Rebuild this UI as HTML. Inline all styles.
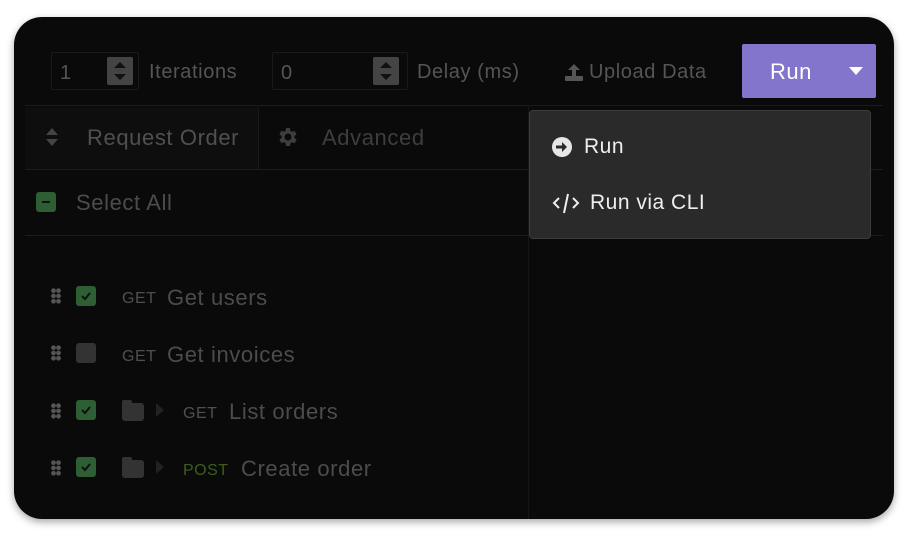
<!DOCTYPE html>
<html><head><style>
*{margin:0;padding:0;box-sizing:border-box}
body{width:920px;height:542px;background:#fff;font-family:"Liberation Sans",sans-serif;position:relative;overflow:hidden}
.card{position:absolute;left:14px;top:17px;width:880px;height:502px;background:#0a0a0a;border-radius:28px;box-shadow:0 3px 8px rgba(0,0,0,.35);overflow:hidden}
.a{position:absolute;white-space:nowrap}
.t{color:#555;font-size:20px;letter-spacing:.6px}
.inp{position:absolute;border:1px solid #1a1a1a;border-radius:2px;height:38px;top:35px}
.spin{position:absolute;width:26px;height:28px;background:#444;border-radius:2px;top:4px}
.hl{position:absolute;height:1px;background:#1c1c1c}
.cb{position:absolute;width:20px;height:20px;border-radius:3px;background:#2d5e34}
.cb.off{background:#333}
.dots{position:absolute;width:10px;height:16px;background:radial-gradient(circle,#555 2.2px,transparent 2.5px) 0 0/5px 5.3px}
.m{font-size:16px;color:#505050;letter-spacing:.5px}
.n{font-size:22px;color:#4c4c4c;letter-spacing:.6px}
.fold{position:absolute;width:22px;height:18px;background:#333;border-radius:3px}
.fold:before{content:"";position:absolute;left:0;top:-3px;width:10px;height:5px;background:#333;border-radius:2px 2px 0 0}
.tri{position:absolute;width:0;height:0;border-left:8px solid #222;border-top:7px solid transparent;border-bottom:7px solid transparent}
</style></head><body>
<div class="card">
 <div class="inp" style="left:37px;width:88px"><span class="a t" style="left:8px;top:9px;color:#555">1</span><div class="spin" style="left:55px"><svg width="26" height="28"><path d="M7 11 13 5 19 11Z M7 17 13 23 19 17Z" fill="#111"/></svg></div></div>
 <span class="a t" style="left:135px;top:44px">Iterations</span>
 <div class="inp" style="left:258px;width:136px"><span class="a t" style="left:8px;top:9px">0</span><div class="spin" style="left:100px"><svg width="26" height="28"><path d="M7 11 13 5 19 11Z M7 17 13 23 19 17Z" fill="#111"/></svg></div></div>
 <span class="a t" style="left:403px;top:44px">Delay (ms)</span>
 <svg class="a" style="left:549px;top:44px" width="22" height="22"><path d="M11 3 5 9h4v7h4V9h4Z" fill="#555"/><rect x="2" y="15" width="18" height="5" rx="1" fill="#555"/></svg>
 <span class="a t" style="left:575px;top:44px">Upload Data</span>
 <div class="a" style="left:728px;top:27px;width:134px;height:54px;background:#8475cc;border-radius:2px">
  <span class="a" style="left:28px;top:15px;color:#fff;font-size:22px;letter-spacing:.5px">Run</span>
  <svg class="a" style="left:106px;top:22px" width="16" height="10"><path d="M1 1h14L8 9Z" fill="#fff"/></svg>
 </div>
 <div class="hl" style="left:11px;right:11px;top:88px"></div>
 <div class="a" style="left:11px;top:90px;width:233px;height:62px;background:#0e0e0e"></div>
 <div class="a" style="left:244px;top:90px;width:1px;height:62px;background:#1a1a1a"></div>
 <svg class="a" style="left:29px;top:108px" width="18" height="24"><path d="M3 10 9 3 15 10Z M3 14 9 21 15 14Z" fill="#444"/></svg>
 <span class="a n" style="left:73px;top:108px;color:#505050">Request Order</span>
 <svg class="a" style="left:261px;top:108px" width="24" height="24" viewBox="0 0 24 24"><path fill="#3e3e3e" d="M19.4 13a7.5 7.5 0 0 0 0-2l2.1-1.6-2-3.5-2.5 1a7 7 0 0 0-1.7-1L15 3h-4l-.4 2.7a7 7 0 0 0-1.7 1l-2.5-1-2 3.5L6.6 11a7.5 7.5 0 0 0 0 2l-2.2 1.6 2 3.5 2.5-1a7 7 0 0 0 1.7 1L11 21h4l.4-2.7a7 7 0 0 0 1.7-1l2.5 1 2-3.5ZM13 15.5a3.5 3.5 0 1 1 0-7 3.5 3.5 0 0 1 0 7Z"/></svg>
 <span class="a n" style="left:308px;top:108px;color:#3e3e3e">Advanced</span>
 <div class="hl" style="left:11px;right:11px;top:152px"></div>
 <div class="cb" style="left:22px;top:175px;background:#2d5e34"><div style="position:absolute;left:6px;top:9px;width:8px;height:2px;background:#111"></div></div>
 <span class="a n" style="left:62px;top:173px">Select All</span>
 <div class="hl" style="left:11px;right:11px;top:218px"></div>
 <div class="a" style="left:514px;top:88px;width:1px;height:414px;background:#161616"></div>

 <div class="dots" style="left:37px;top:271px"></div>
 <div class="cb" style="left:62px;top:269px"><svg width="20" height="20"><path d="M6 10l3 3 5-6" stroke="#111" stroke-width="2" fill="none"/></svg></div>
 <span class="a m" style="left:108px;top:273px">GET</span><span class="a n" style="left:153px;top:268px">Get users</span>

 <div class="dots" style="left:37px;top:328px"></div>
 <div class="cb off" style="left:62px;top:326px"></div>
 <span class="a m" style="left:108px;top:331px">GET</span><span class="a n" style="left:153px;top:325px">Get invoices</span>

 <div class="dots" style="left:37px;top:386px"></div>
 <div class="cb" style="left:62px;top:383px"><svg width="20" height="20"><path d="M6 10l3 3 5-6" stroke="#111" stroke-width="2" fill="none"/></svg></div>
 <div class="fold" style="left:108px;top:386px"></div><div class="tri" style="left:142px;top:386px"></div>
 <span class="a m" style="left:169px;top:388px">GET</span><span class="a n" style="left:215px;top:382px">List orders</span>

 <div class="dots" style="left:37px;top:443px"></div>
 <div class="cb" style="left:62px;top:440px"><svg width="20" height="20"><path d="M6 10l3 3 5-6" stroke="#111" stroke-width="2" fill="none"/></svg></div>
 <div class="fold" style="left:108px;top:443px"></div><div class="tri" style="left:142px;top:443px"></div>
 <span class="a m" style="left:169px;top:445px;color:#3c5e1c">POST</span><span class="a n" style="left:227px;top:439px">Create order</span>
</div>
<div class="a" style="left:529px;top:110px;width:342px;height:129px;background:#2a2a2a;border:1px solid #3c3c3c;border-radius:4px">
 <svg class="a" style="left:21px;top:25px" width="22" height="22"><circle cx="11" cy="11" r="10" fill="#e6e6e6"/><path d="M5 9.5h6V6l5 5-5 5v-3.5H5Z" fill="#2a2a2a"/></svg>
 <span class="a" style="left:54px;top:24px;color:#eee;font-size:21px;letter-spacing:.5px">Run</span>
 <svg class="a" style="left:21px;top:80px" width="30" height="24"><path d="M8 7 3 12l5 5M22 7l5 5-5 5M17 3l-4 19" stroke="#eee" stroke-width="2" fill="none"/></svg>
 <span class="a" style="left:60px;top:80px;color:#eee;font-size:21px;letter-spacing:.5px">Run via CLI</span>
</div>
</body></html>
